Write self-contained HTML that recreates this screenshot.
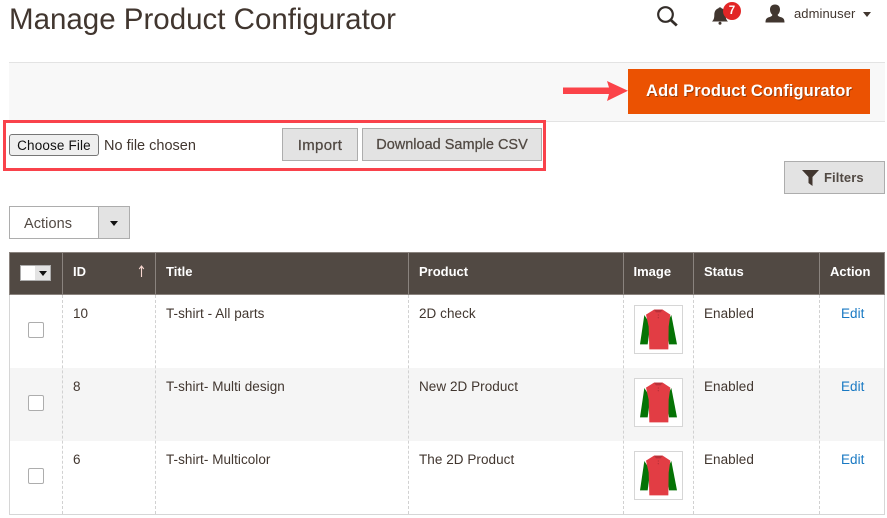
<!DOCTYPE html>
<html><head><meta charset="utf-8"><style>
html,body{margin:0;padding:0;background:#fff}
body{width:887px;height:518px;position:relative;overflow:hidden;font-family:"Liberation Sans",sans-serif;color:#41362f}
.a{position:absolute;box-sizing:border-box}
.t{position:absolute;white-space:nowrap;font-size:13.5px;line-height:18px;letter-spacing:.05px;color:#41362f}
.h{position:absolute;white-space:nowrap;font-size:13px;line-height:18px;font-weight:bold;color:#fff;top:263px}
.btn{position:absolute;box-sizing:border-box;background:#e3e3e3;border:1px solid #adadad;color:#514943;font-size:14.5px;text-align:center;white-space:nowrap;-webkit-text-stroke:.25px #514943}
.v{position:absolute;top:252px;width:1px;height:43px;background:#8a837e}
.d{position:absolute;top:295px;height:219px;width:0;border-left:1px dashed #d1d1d1}
.cb{position:absolute;left:28px;width:16px;height:16px;box-sizing:border-box;border:1px solid #adadad;border-radius:2px;background:#fff}
.im{position:absolute;left:634px;width:49px;height:49px;box-sizing:border-box;border:1px solid #d6d6d6;background:#fff}
.im svg{position:absolute;left:-1px;top:-1px}
a{color:#1979c3;text-decoration:none}
</style></head><body>

<div class="t" style="left:9px;top:3px;font-size:29.5px;line-height:34px;letter-spacing:0">Manage Product Configurator</div>

<svg class="a" style="left:655px;top:5px" width="24" height="22" viewBox="0 0 24 22"><circle cx="10.500" cy="9.500" r="7.300" fill="none" stroke="#332d29" stroke-width="2.200"/><path d="M15.800 15L21.800 20.500" stroke="#332d29" stroke-width="2.800" fill="none"/></svg>
<svg class="a" style="left:711px;top:6px" width="18" height="19" viewBox="0 0 18 19"><path d="M1 15.500c1.800-1.800 2.300-3.500 2.300-6.500 0-3.700 1.700-6 4.200-6.700C7.700 1 10.300 1 10.500 2.300 13 3 14.700 5.300 14.700 9c0 3 .5 4.700 2.300 6.500z" fill="#41362f"/><circle cx="9" cy="17.300" r="1.500" fill="#41362f"/></svg>
<div class="a" style="left:723px;top:2px;width:18px;height:18px;border-radius:50%;background:#e22626;color:#fff;font-size:11.500px;font-weight:bold;line-height:18px;text-align:center">7</div>
<svg class="a" style="left:764px;top:4px" width="22" height="19" viewBox="0 0 22 19"><path d="M11 .5c3.300 0 5 2.100 5 5 0 2.300-.9 4-2.300 5.300.1 1.300 1 1.700 3 2.300 2.600.8 3.800 1.700 3.800 5.400h-19c0-3.700 1.200-4.600 3.800-5.400 2-.6 2.900-1 3-2.300C6.900 9.500 6 7.800 6 5.500c0-2.900 1.700-5 5-5z" fill="#41362f"/></svg>
<div class="t" style="left:794px;top:5px;font-size:13px;letter-spacing:.08px">adminuser</div>
<div class="a" style="left:863px;top:12px;width:0;height:0;border:4px solid transparent;border-top:5px solid #41362f;border-bottom:0"></div>

<div class="a" style="left:9px;top:62px;width:876px;height:60px;background:#f8f8f8;border-top:1px solid #e3e3e3;border-bottom:1px solid #e3e3e3"></div>
<div class="a" style="left:628px;top:69px;width:242px;height:45px;background:#eb5202;color:#fff;font-size:16.500px;font-weight:bold;line-height:45px;text-align:center;white-space:nowrap;letter-spacing:.1px;text-shadow:1px 1px 0 #9a3a08">Add Product Configurator</div>
<svg class="a" style="left:563px;top:80px" width="65" height="22" viewBox="0 0 65 22"><path d="M0 7.500h46L44 1l21 9.700L44 21l2-7H0z" fill="#fb4349"/></svg>

<div class="a" style="left:3px;top:120px;width:543px;height:51px;border:3px solid #f9424b;background:#fff"></div>
<div class="a" style="left:9px;top:134px;width:90px;height:22px;background:#efefef;border:1px solid #767676;border-radius:3px;font-size:13.500px;line-height:21px;text-align:center;color:#111;letter-spacing:.15px;white-space:nowrap">Choose File</div>
<div class="t" style="left:104px;top:137px;font-size:14.500px;letter-spacing:0">No file chosen</div>
<div class="btn" style="left:282px;top:128px;width:76px;height:33px;line-height:33px;font-size:15px;letter-spacing:.35px">Import</div>
<div class="btn" style="left:362px;top:128px;width:180px;height:33px;line-height:33px">Download Sample CSV</div>

<div class="btn" style="left:784px;top:161px;width:101px;height:33px;line-height:31px;font-size:13px;font-weight:bold;text-align:left;padding-left:39px;letter-spacing:.1px;-webkit-text-stroke:0">Filters</div>
<svg class="a" style="left:802px;top:170px" width="17" height="16" viewBox="0 0 17 16"><path d="M0 0h17L10.500 7v9L6.500 13V7z" fill="#41362f"/></svg>

<div class="a" style="left:9px;top:206px;width:121px;height:33px;border:1px solid #adadad;background:#fff"></div>
<div class="a" style="left:98px;top:206px;width:32px;height:33px;border:1px solid #adadad;background:#e3e3e3"></div>
<div class="a" style="left:110px;top:221px;width:0;height:0;border:4px solid transparent;border-top:5px solid #111;border-bottom:0"></div>
<div class="t" style="left:24px;top:215px;font-size:14.500px;letter-spacing:.07px;color:#514943">Actions</div>

<div class="a" style="left:9px;top:252px;width:876px;height:43px;background:#514943;border:1px solid #8a837e;border-bottom:1px solid #8a837e"></div>
<div class="a" style="left:9px;top:368px;width:876px;height:73px;background:#f5f5f5"></div>
<div class="a" style="left:9px;top:295px;width:1px;height:219px;background:#d6d6d6"></div>
<div class="a" style="left:884px;top:295px;width:1px;height:219px;background:#d6d6d6"></div>
<div class="a" style="left:9px;top:514px;width:876px;height:1px;background:#d6d6d6"></div>

<div class="v" style="left:62px"></div><div class="v" style="left:155px"></div><div class="v" style="left:408px"></div><div class="v" style="left:623px"></div><div class="v" style="left:693px"></div><div class="v" style="left:819px"></div>
<div class="d" style="left:62px"></div><div class="d" style="left:155px"></div><div class="d" style="left:408px"></div><div class="d" style="left:623px"></div><div class="d" style="left:693px"></div><div class="d" style="left:819px"></div>

<div class="a" style="left:20px;top:265px;width:31px;height:16px;background:#fff;border:1px solid #adadad"></div>
<div class="a" style="left:35px;top:266px;width:15px;height:14px;background:#e3e3e3"></div>
<div class="a" style="left:39px;top:271px;width:0;height:0;border:4px solid transparent;border-top:5px solid #111;border-bottom:0"></div>

<div class="h" style="left:73px">ID</div>
<svg class="a" style="left:138px;top:265px" width="7" height="12" viewBox="0 0 7 12"><path d="M3.500 12V1M1.200 4l2.300-3 2.300 3" stroke="#f6d6cf" stroke-width="1.100" fill="none"/></svg>
<div class="h" style="left:166px">Title</div>
<div class="h" style="left:419px">Product</div>
<div class="h" style="left:633.500px">Image</div>
<div class="h" style="left:704px">Status</div>
<div class="h" style="left:830px">Action</div>

<div class="cb" style="top:322px"></div>
<div class="t" style="left:73px;top:305px">10</div>
<div class="t" style="left:166px;top:305px">T-shirt - All parts</div>
<div class="t" style="left:419px;top:305px">2D check</div>
<div class="im" style="top:305px"><svg width="49" height="49" viewBox="42 30 147 147"><path d="M73 60L60 148h23l8-60z" fill="#057305"/><path d="M154 60l17 88h-24l-8-60z" fill="#057305"/><path d="M102 44h26l23 15-5 36-1 68H88l-2-68-8-36z" fill="#e23d44"/><path d="M102 44h26l-6 8h-14z" fill="#b93038"/><circle cx="115" cy="60" r="2" fill="#b93038"/><circle cx="115" cy="68" r="2" fill="#b93038"/></svg></div>
<div class="t" style="left:704px;top:305px">Enabled</div>
<div class="t" style="left:841px;top:305px"><a>Edit</a></div>

<div class="cb" style="top:395px"></div>
<div class="t" style="left:73px;top:378px">8</div>
<div class="t" style="left:166px;top:378px">T-shirt- Multi design</div>
<div class="t" style="left:419px;top:378px">New 2D Product</div>
<div class="im" style="top:378px"><svg width="49" height="49" viewBox="42 30 147 147"><path d="M73 60L60 148h23l8-60z" fill="#057305"/><path d="M154 60l17 88h-24l-8-60z" fill="#057305"/><path d="M102 44h26l23 15-5 36-1 68H88l-2-68-8-36z" fill="#e23d44"/><path d="M102 44h26l-6 8h-14z" fill="#b93038"/><circle cx="115" cy="60" r="2" fill="#b93038"/><circle cx="115" cy="68" r="2" fill="#b93038"/></svg></div>
<div class="t" style="left:704px;top:378px">Enabled</div>
<div class="t" style="left:841px;top:378px"><a>Edit</a></div>

<div class="cb" style="top:468px"></div>
<div class="t" style="left:73px;top:451px">6</div>
<div class="t" style="left:166px;top:451px">T-shirt- Multicolor</div>
<div class="t" style="left:419px;top:451px">The 2D Product</div>
<div class="im" style="top:451px"><svg width="49" height="49" viewBox="42 30 147 147"><path d="M73 60L60 148h23l8-60z" fill="#057305"/><path d="M154 60l17 88h-24l-8-60z" fill="#057305"/><path d="M102 44h26l23 15-5 36-1 68H88l-2-68-8-36z" fill="#e23d44"/><path d="M102 44h26l-6 8h-14z" fill="#b93038"/><circle cx="115" cy="60" r="2" fill="#b93038"/><circle cx="115" cy="68" r="2" fill="#b93038"/></svg></div>
<div class="t" style="left:704px;top:451px">Enabled</div>
<div class="t" style="left:841px;top:451px"><a>Edit</a></div>

</body></html>
